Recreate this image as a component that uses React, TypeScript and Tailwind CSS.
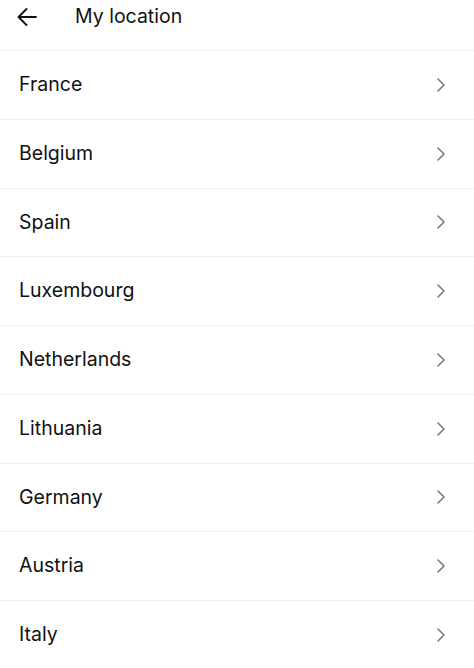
import React from 'react';

const countries = ['France', 'Belgium', 'Spain', 'Luxembourg', 'Netherlands', 'Lithuania', 'Germany', 'Austria', 'Italy'];

const App: React.FC = () => {
  return (
    <div className="min-h-screen bg-white text-[#111] font-['Inter',sans-serif]">
      <header className="h-[50px] flex items-start pt-[7px]">
        <button className="pl-[17px] pr-[18px] pt-[1px] flex items-center">
          <svg width="20" height="18" viewBox="0 0 20 18" fill="none" stroke="#111" strokeWidth="1.8" strokeLinecap="round" strokeLinejoin="round">
            <path d="M19 9H1.5M9.5 1L1.5 9l8 8" />
          </svg>
        </button>
        <h1 className="ml-[20px] text-[19.5px] font-normal leading-[19px]">My location</h1>
      </header>
      <ul>
        {countries.map((c) => (
          <li
            key={c}
            className="h-[68.75px] border-t-[1.5px] border-[#efefef] flex items-center justify-between pl-[19px] pr-[28px]"
          >
            <span className="text-[19.5px] font-normal leading-none">{c}</span>
            <svg width="10" height="16" viewBox="0 0 10 16" fill="none" stroke="#7a7a7a" strokeWidth="1.6" strokeLinecap="round" strokeLinejoin="round">
              <path d="M2 2l6 6-6 6" />
            </svg>
          </li>
        ))}
      </ul>
    </div>
  );
};

export default App;
